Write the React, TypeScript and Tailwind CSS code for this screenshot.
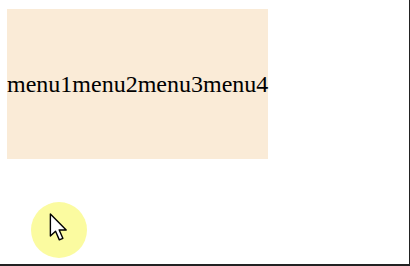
export default function App() {
  const menus = ["menu1", "menu2", "menu3", "menu4"];

  return (
    <div className="relative w-[410px] h-[266px] bg-white border-r border-b-2 border-[#222] overflow-hidden">
      {/* menu bar */}
      <div className="inline-flex items-center h-[150px] ml-[7px] mt-[9px] bg-[#faebd7] text-[24px] text-black font-[family-name:'Liberation_Serif',serif]">
        {menus.map((m) => (
          <span key={m}>{m}</span>
        ))}
      </div>

      {/* click highlight + cursor */}
      <div className="absolute left-[31px] top-[202px] w-[56px] h-[56px] rounded-full bg-[#fbfba0]">
        <svg
          className="absolute left-[18px] top-[11px]"
          width="19"
          height="28"
          viewBox="0 0 13 20"
        >
          <path
            d="M0.7 0.7 L0.7 16.5 L4.4 13 L7.1 19.2 L9.6 18.1 L7 12.1 L12 12.1 Z"
            fill="#fff"
            stroke="#000"
            strokeWidth="1"
            strokeLinejoin="round"
          />
        </svg>
      </div>
    </div>
  );
}
